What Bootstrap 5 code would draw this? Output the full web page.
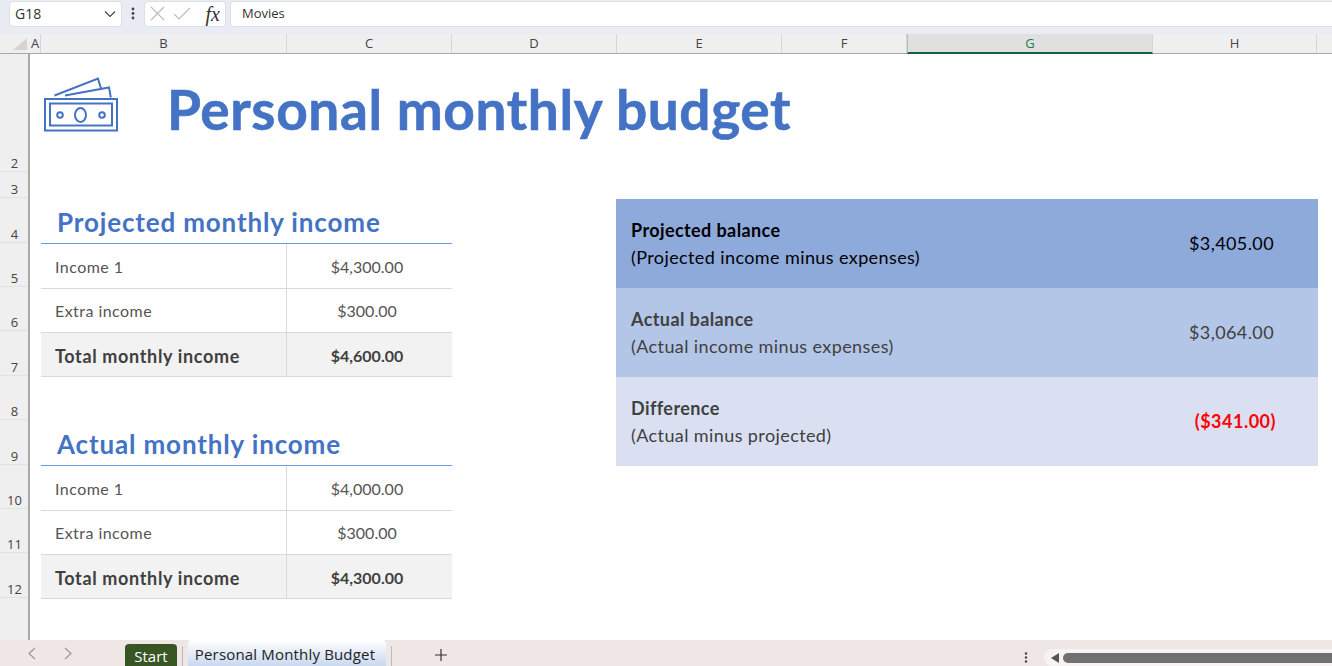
<!DOCTYPE html>
<html lang="en">
<head>
    <meta charset="UTF-8">
    <title>Personal monthly budget</title>
    <link rel="stylesheet" href="https://cdn.jsdelivr.net/npm/bootstrap@5.3.0/dist/css/bootstrap.min.css">
    <style>
        html, body { height: 666px; overflow: hidden; }
        body { background: #fff; font-family: "Lato", sans-serif; color: #404040; }
        .app { width: 1332px; height: 666px; }
        .fbar { height: 34px; background: #e9ecf2; padding: 0 0 7px 9px; font-family: "Open Sans", sans-serif; font-size: 13px; color: #333; }
        .fbox { background: #fff; border: 1px solid #dcdfe5; border-radius: 4px; height: 26px; }
        .namebox { width: 113px; padding: 0 5px; font-size: 14px; }
        .dots { width: 22px; }
        .fxbox { width: 82px; padding: 0 5px; }
        .fxtext { font-family: "Liberation Serif", serif; font-style: italic; font-size: 20px; line-height: 24px; color: #333; margin-left: auto; }
        .formula { flex: 1; margin-left: 4px; padding-left: 11px; border-right: 0; border-radius: 4px 0 0 4px; }
        .colhead { height: 20px; background: #efefef; border-bottom: 1px solid #a9a9a9; font-family: "Open Sans", sans-serif; font-size: 13px; color: #444; }
        .corner { width: 30px; }
        .corner svg { display: block; margin-left: 13px; margin-top: 4px; }
        .ch { border-right: 1px solid #d6d6d6; text-align: center; line-height: 19px; }
        .ch-sel { background: #e0e0e0; color: #1e7a50; border-bottom: 2px solid #14633c; height: 20px; border-left: 1px solid #bbb; }
        .grid-body { height: 586px; }
        .rowhead { width: 30px; background: #efefef; border-right: 2px solid #a9a9a9; font-family: "Open Sans", sans-serif; font-size: 13px; color: #444; }
        .rh { border-bottom: 1px solid #e2e2e2; display: flex; align-items: flex-end; justify-content: center; line-height: 16px; padding-left: 1px; }
        .rh-top { height: 92px; }
        .rh-fill { flex: 1; }
        .sheet { flex: 1; min-width: 0; }
        .title-row { height: 145px; position: relative; }
        .title-row svg { display: block; position: absolute; left: 0; top: 0; }
        .main-title { position: absolute; left: 137px; top: 23px; margin: 0; font-size: 55px; line-height: 64px; font-weight: 700; color: #4472c4; letter-spacing: .6px; -webkit-text-stroke: .6px #4472c4; white-space: nowrap; }
        .left-col { width: 411px; margin-left: 11px; }
        .right-col { width: 702px; margin-left: 164px; }
        .sec-title { height: 45px; margin: 0; padding-left: 16px; font-size: 26px; line-height: 46px; font-weight: 700; color: #4472c4; border-bottom: 1px solid #6c9bdc; white-space: nowrap; letter-spacing: .85px; }
        .inc-table { margin: 0; table-layout: fixed; width: 411px; font-size: 16px; border: 0; border-collapse: separate; border-spacing: 0; }
        .inc-table tbody, .inc-table tr { border: 0; }
        .inc-table td { height: 44px; padding: 1px 0 0; vertical-align: middle; border-top: 0; border-bottom: 1px solid #d9d9d9; color: #555; }
        .inc-table tr.tall-row td { height: 45px; }
        .inc-table td:first-child { width: 246px; padding-left: 14px; border-right: 1px solid #d9d9d9; letter-spacing: .45px; }
        .inc-table td:last-child { text-align: center; padding-right: 5px; }
        .inc-table tr.total-row td { background: #f2f2f2; font-weight: 700; color: #404040; padding-top: 3px; }
        .inc-table tr.total-row td:first-child { font-size: 18px; letter-spacing: .65px; }
        .gap-row { height: 44px; }
        .bal { height: 89px; padding: 0 44px 0 15px; font-size: 18px; line-height: 27px; letter-spacing: .4px; }
        .bal-a { background: #8eaadb; color: #000; }
        .bal-b { background: #b4c6e7; color: #404040; }
        .bal-c { background: #dae0f2; color: #404040; }
        .neg { color: #f00; font-weight: 700; margin-right: -2px; letter-spacing: .5px; }
        .tabbar { height: 26px; background: #efe7e5; }
        .navs { width: 125px; padding-left: 27px; gap: 28px; }
        .start-tab { background: #375623; color: #fff; width: 52px; height: 22px; margin-top: 4px; padding-top: 3px; text-align: center; border-radius: 4px 4px 0 0; line-height: 19px; font-family: "Open Sans", sans-serif; font-size: 15px; }
        .tsep { width: 1px; height: 20px; background: #bbb; margin: 6px 5px 0; }
        .active-tab { background: linear-gradient(#fff, #c9d8ef); color: #222; height: 26px; width: 198px; padding-right: 4px; text-align: center; border-radius: 4px 4px 0 0; line-height: 29px; font-family: "Open Sans", sans-serif; font-size: 15px; font-weight: 500; letter-spacing: .17px; white-space: nowrap; }
        .plus { margin-left: 37px; }
        .vdots { margin-left: 576px; margin-top: 12px; }
        .scrolltrack { flex: 1; margin-top: 9px; height: 17px; background: #f6f3f2; border-radius: 8px 0 0 8px; padding-left: 6px; }
        .scrollthumb { flex: 1; height: 10px; background: #707070; border-radius: 5px 0 0 5px; margin-left: 4px; }
    </style>
</head>
<body>
<div class="app d-flex flex-column">
    <div class="fbar d-flex align-items-center">
        <div class="fbox namebox d-flex align-items-center justify-content-between">
            <span>G18</span>
            <svg width="12" height="8" viewBox="0 0 12 8"><path d="M1 1.500 6 6.500 11 1.500" fill="none" stroke="#444" stroke-width="1.2"/></svg>
        </div>
        <div class="dots d-flex justify-content-center">
            <svg width="4" height="13" viewBox="0 0 4 13"><circle cx="2" cy="2" r="1.4" fill="#444"/><circle cx="2" cy="6.500" r="1.4" fill="#444"/><circle cx="2" cy="11" r="1.4" fill="#444"/></svg>
        </div>
        <div class="fbox fxbox d-flex align-items-center gap-2">
            <svg width="15" height="15" viewBox="0 0 15 15"><path d="M1 1 14 14M14 1 1 14" stroke="#bbb" stroke-width="1.1" fill="none"/></svg>
            <svg width="18" height="15" viewBox="0 0 18 15"><path d="M1 8 6 13 17 2" stroke="#bbb" stroke-width="1.1" fill="none"/></svg>
            <span class="fxtext">fx</span>
        </div>
        <div class="fbox formula d-flex align-items-center">Movies</div>
    </div>

    <div class="colhead d-flex">
        <div class="corner"><svg width="14" height="12" viewBox="0 0 14 12"><path d="M14 0V12H0Z" fill="#d4d4d4"/></svg></div>
        <div class="ch" style="width:11px">A</div>
        <div class="ch" style="width:246px">B</div>
        <div class="ch" style="width:165px">C</div>
        <div class="ch" style="width:165px">D</div>
        <div class="ch" style="width:165px">E</div>
        <div class="ch" style="width:125px">F</div>
        <div class="ch ch-sel" style="width:246px">G</div>
        <div class="ch" style="width:164px">H</div>
        <div class="flex-grow-1"></div>
    </div>

    <div class="grid-body d-flex">
        <div class="rowhead d-flex flex-column">
            <div class="rh-top"></div>
            <div class="rh" style="height:26px">2</div>
            <div class="rh" style="height:26px">3</div>
            <div class="rh" style="height:45px">4</div>
            <div class="rh" style="height:44px">5</div>
            <div class="rh" style="height:44px">6</div>
            <div class="rh" style="height:45px">7</div>
            <div class="rh" style="height:44px">8</div>
            <div class="rh" style="height:45px">9</div>
            <div class="rh" style="height:44px">10</div>
            <div class="rh" style="height:44px">11</div>
            <div class="rh" style="height:45px">12</div>
            <div class="rh-fill"></div>
        </div>
        <div class="sheet">
            <div class="title-row">
                <svg width="100" height="90" viewBox="0 0 100 90">
                    <g fill="none" stroke="#4472c4" stroke-width="2" transform="translate(-30 -54)">
                        <rect x="45" y="99" width="72" height="31.500"/>
                        <rect x="50" y="103.500" width="62" height="22"/>
                        <ellipse cx="80.500" cy="115" rx="5.500" ry="7"/>
                        <circle cx="60" cy="115" r="2.800"/>
                        <circle cx="102" cy="115" r="2.800"/>
                        <path d="M54.500 95.500 98 78.500 101 88.500"/>
                        <path d="M65 95.500 109 87.500 110.800 97.500"/>
                    </g>
                </svg>
                <h1 class="main-title">Personal monthly budget</h1>
            </div>
            <div class="d-flex">
                <div class="left-col">
                    <h2 class="sec-title">Projected monthly income</h2>
                    <table class="table inc-table">
                        <tr class="tall-row"><td>Income 1</td><td>$4,300.00</td></tr>
                        <tr><td>Extra income</td><td>$300.00</td></tr>
                        <tr class="total-row"><td>Total monthly income</td><td>$4,600.00</td></tr>
                    </table>
                    <div class="gap-row"></div>
                    <h2 class="sec-title">Actual monthly income</h2>
                    <table class="table inc-table">
                        <tr class="tall-row"><td>Income 1</td><td>$4,000.00</td></tr>
                        <tr><td>Extra income</td><td>$300.00</td></tr>
                        <tr class="total-row"><td>Total monthly income</td><td>$4,300.00</td></tr>
                    </table>
                </div>
                <div class="right-col">
                    <div class="bal bal-a d-flex align-items-center justify-content-between">
                        <div><div class="fw-bold">Projected balance</div><div>(Projected income minus expenses)</div></div>
                        <div>$3,405.00</div>
                    </div>
                    <div class="bal bal-b d-flex align-items-center justify-content-between">
                        <div><div class="fw-bold">Actual balance</div><div>(Actual income minus expenses)</div></div>
                        <div>$3,064.00</div>
                    </div>
                    <div class="bal bal-c d-flex align-items-center justify-content-between">
                        <div><div class="fw-bold">Difference</div><div>(Actual minus projected)</div></div>
                        <div class="neg">($341.00)</div>
                    </div>
                </div>
            </div>
        </div>
    </div>

    <div class="tabbar d-flex">
        <div class="navs d-flex align-items-center">
            <svg width="9" height="13" viewBox="0 0 9 13"><path d="M8 1 2 6.500 8 12" fill="none" stroke="#999" stroke-width="1.2"/></svg>
            <svg width="9" height="13" viewBox="0 0 9 13"><path d="M1 1 7 6.500 1 12" fill="none" stroke="#999" stroke-width="1.2"/></svg>
        </div>
        <div class="start-tab">Start</div>
        <div class="tsep"></div>
        <div class="active-tab">Personal Monthly Budget</div>
        <div class="tsep"></div>
        <svg class="plus mt-2" width="14" height="14" viewBox="0 0 14 14"><path d="M7 1V13M1 7H13" stroke="#333" stroke-width="1.2"/></svg>
        <svg class="vdots" width="4" height="11" viewBox="0 0 4 11"><circle cx="2" cy="1.500" r="1.200" fill="#444"/><circle cx="2" cy="5.500" r="1.200" fill="#444"/><circle cx="2" cy="9.500" r="1.200" fill="#444"/></svg>
        <div class="scrolltrack d-flex align-items-center ms-3">
            <svg width="9" height="10" viewBox="0 0 9 10"><path d="M9 0V10L1 5Z" fill="#555"/></svg>
            <div class="scrollthumb"></div>
        </div>
    </div>
</div>
<script src="https://cdn.jsdelivr.net/npm/bootstrap@5.3.0/dist/js/bootstrap.bundle.min.js"></script>
</body>
</html>
